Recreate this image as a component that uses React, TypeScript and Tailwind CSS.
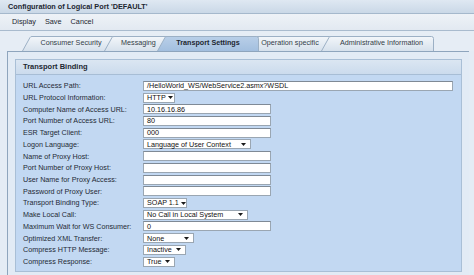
import React from "react";

type Row =
  | { label: string; kind: "input"; value: string; w: string }
  | { label: string; kind: "select"; value: string; w: string };

const rows: Row[] = [
  { label: "URL Access Path:", kind: "input", value: "/HelloWorld_WS/WebService2.asmx?WSDL", w: "w-[310px]" },
  { label: "URL Protocol Information:", kind: "select", value: "HTTP", w: "w-[32px]" },
  { label: "Computer Name of Access URL:", kind: "input", value: "10.16.16.86", w: "w-[128px]" },
  { label: "Port Number of Access URL:", kind: "input", value: "80", w: "w-[128px]" },
  { label: "ESR Target Client:", kind: "input", value: "000", w: "w-[128px]" },
  { label: "Logon Language:", kind: "select", value: "Language of User Context", w: "w-[108px]" },
  { label: "Name of Proxy Host:", kind: "input", value: "", w: "w-[128px]" },
  { label: "Port Number of Proxy Host:", kind: "input", value: "", w: "w-[128px]" },
  { label: "User Name for Proxy Access:", kind: "input", value: "", w: "w-[128px]" },
  { label: "Password of Proxy User:", kind: "input", value: "", w: "w-[128px]" },
  { label: "Transport Binding Type:", kind: "select", value: "SOAP 1.1", w: "w-[44px]" },
  { label: "Make Local Call:", kind: "select", value: "No Call in Local System", w: "w-[105px]" },
  { label: "Maximum Wait for WS Consumer:", kind: "input", value: "0", w: "w-[128px]" },
  { label: "Optimized XML Transfer:", kind: "select", value: "None", w: "w-[51px]" },
  { label: "Compress HTTP Message:", kind: "select", value: "Inactive", w: "w-[43px]" },
  { label: "Compress Response:", kind: "select", value: "True", w: "w-[32px]" },
];

const tabs = [
  { label: "Consumer Security", w: 90, active: false },
  { label: "Messaging", w: 61, active: false },
  { label: "Transport Settings", w: 94, active: true },
  { label: "Operation specific", w: 86, active: false },
  { label: "Administrative Information", w: 113, active: false },
];

function Tab({ label, w, active, last, idx }: { label: string; w: number; active: boolean; last: boolean; idx: number }) {
  const h = 15;
  const total = last ? w : w + 8;
  const gid = `tabgrad${idx}`;
  return (
    <div className="relative shrink-0 h-[15px]" style={{ width: w, marginRight: last ? 0 : -8, zIndex: active ? 10 : idx + 1 }}>
      <svg className="absolute left-0 top-0" width={total} height={h} viewBox={`0 0 ${total} ${h}`}>
        <defs>
          <linearGradient id={gid} x1="0" y1="0" x2="0" y2="1">
            <stop offset="0" stopColor={active ? "#b9cfe8" : "#f3f6fa"} />
            <stop offset="1" stopColor={active ? "#a3bfdf" : "#d6e1ec"} />
          </linearGradient>
        </defs>
        <path
          d={`M0.5 ${h} L8 1.5 Q8.5 0.5 10 0.5 L${total - 2.5} 0.5 Q${total - 0.5} 0.5 ${total - 0.5} 2.5 L${total - 0.5} ${h}`}
          fill={`url(#${gid})`}
          stroke="#9cb0c5"
          strokeWidth="1"
        />
      </svg>
      <div
        className={`relative flex h-full items-center justify-center pl-[8px] text-[7.2px] whitespace-nowrap ${active ? "font-bold text-[#1d2731]" : "text-[#333d48]"}`}
        style={{ width: w }}
      >
        {label}
      </div>
    </div>
  );
}

function Caret() {
  return (
    <svg width="5" height="3" viewBox="0 0 5 3" className="shrink-0">
      <path d="M0 0 L5 0 L2.5 3 Z" fill="#1a1a1a" />
    </svg>
  );
}

export default function App() {
  return (
    <div
      className="w-[474px] h-[275px] overflow-hidden bg-[#e4ecf5] text-[#1f2a35] flex flex-col"
      style={{ fontFamily: '"Liberation Sans", Arial, sans-serif' }}
    >
      {/* title bar */}
      <div className="h-[14px] shrink-0 flex items-center pl-[8px] bg-gradient-to-b from-[#dfe8f2] to-[#cad8e7] border-b border-[#a5b8cc]">
        <span className="text-[7.3px] font-bold text-[#1d2731] leading-none">Configuration of Logical Port 'DEFAULT'</span>
      </div>
      {/* toolbar */}
      <div className="h-[17px] shrink-0 flex items-center gap-[9px] pl-[12px] bg-gradient-to-b from-[#eef2f7] to-[#e2e9f1] border-b border-[#a9bbce] text-[7.3px] text-[#1d2731]">
        <span>Display</span>
        <span>Save</span>
        <span>Cancel</span>
      </div>
      {/* tabs */}
      <div className="shrink-0 flex pl-[22px] pt-[5px] bg-[#e6edf5]">
        {tabs.map((t, i) => (
          <Tab key={t.label} idx={i} label={t.label} w={t.w} active={t.active} last={i === tabs.length - 1} />
        ))}
      </div>
      {/* panel */}
      <div className="flex-1 ml-[7px] mr-[5px] border-l border-t border-[#8ea5bd] bg-[#e2ebf5] pt-[7px] pl-[7px] pr-[7px] pb-[3px] flex flex-col">
        <div className="flex-1 flex flex-col border border-[#a9bfd6] bg-[#c2d8f2]">
          <div className="h-[15px] shrink-0 flex items-center pl-[7px] bg-gradient-to-b from-[#dbe6f2] to-[#cbdbed] border-b border-[#a7bdd5]">
            <span className="text-[7.5px] font-bold text-[#1d2731]">Transport Binding</span>
          </div>
          <div className="pt-[5px] pl-[7px] flex flex-col">
            {rows.map((r) => (
              <div key={r.label} className="h-[11.73px] flex items-center">
                <div className="w-[120px] shrink-0 text-[7.2px] text-[#1f2a35] leading-none whitespace-nowrap">{r.label}</div>
                {r.kind === "input" ? (
                  <div
                    className={`${r.w} h-[10px] bg-white border border-[#9aa6b2] border-t-[#7f8a96] flex items-center pl-[3px] text-[7.2px] text-[#111] leading-none whitespace-nowrap`}
                  >
                    {r.value}
                  </div>
                ) : (
                  <div
                    className={`${r.w} h-[10px] bg-white border border-[#9aa6b2] flex items-center justify-between gap-[2px] pl-[3px] pr-[4px] text-[7.2px] text-[#111] leading-none`}
                  >
                    <span className="whitespace-nowrap">{r.value}</span>
                    <Caret />
                  </div>
                )}
              </div>
            ))}
          </div>
        </div>
      </div>
    </div>
  );
}
